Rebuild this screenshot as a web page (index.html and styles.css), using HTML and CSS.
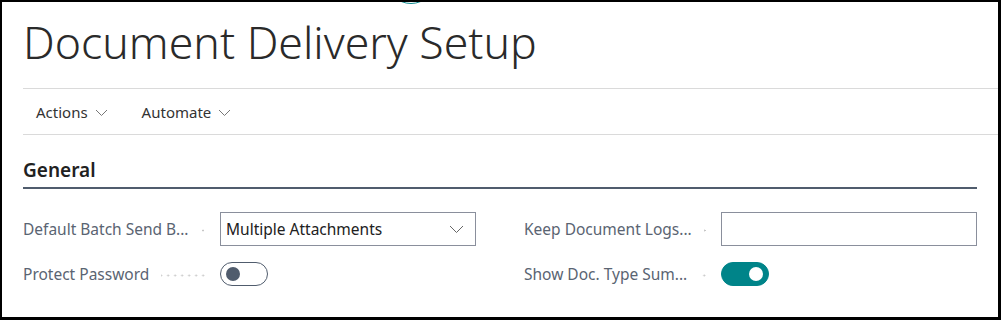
FILE: index.html
```html
<!DOCTYPE html>
<html lang="en">
<head>
  <meta charset="UTF-8" />
  <title>Document Delivery Setup</title>
  <link rel="stylesheet" href="styles.css">
</head>
<body>
  <div class="frame">
    <div class="busy-ring"></div>

    <div class="header">
      <h1 class="title">Document Delivery Setup</h1>
    </div>

    <div class="toolbar">
      <button class="menu-btn">Actions
        <svg class="chev" width="13" height="8" viewBox="0 0 13 8"><path d="M1 1 L6.5 6.5 L12 1" fill="none" stroke="#777" stroke-width="1"/></svg>
      </button>
      <button class="menu-btn">Automate
        <svg class="chev" width="13" height="8" viewBox="0 0 13 8"><path d="M1 1 L6.5 6.5 L12 1" fill="none" stroke="#777" stroke-width="1"/></svg>
      </button>
    </div>

    <div class="section">
      <h2 class="section-title">General</h2>

      <div class="fields">
        <div class="col">
          <div class="field">
            <span class="label">Default Batch Send B...</span>
            <span class="leader"></span>
            <div class="select">
              <span>Multiple Attachments</span>
              <svg width="15" height="9" viewBox="0 0 15 9"><path d="M1 1 L7.5 7.5 L14 1" fill="none" stroke="#666" stroke-width="1"/></svg>
            </div>
          </div>
          <div class="field">
            <span class="label">Protect Password</span>
            <span class="leader"></span>
            <div class="toggle"><span class="knob"></span></div>
          </div>
        </div>

        <div class="col">
          <div class="field">
            <span class="label">Keep Document Logs...</span>
            <span class="leader"></span>
            <div class="input"></div>
          </div>
          <div class="field">
            <span class="label">Show Doc. Type Sum...</span>
            <span class="leader"></span>
            <div class="toggle on"><span class="knob"></span></div>
          </div>
        </div>
      </div>
    </div>
  </div>
</body>
</html>
```

FILE: styles.css
```css
body {
  margin: 0;
  font-family: "Noto Sans", "Open Sans", sans-serif;
  color: #212121;
  background: #ffffff;
}

.frame {
  position: relative;
  width: 1001px;
  height: 320px;
  box-sizing: border-box;
  border: 2px solid #000;
  border-right-width: 3px;
  border-bottom-width: 3px;
  overflow: hidden;
}

.busy-ring {
  position: absolute;
  left: 384px;
  top: -48px;
  width: 50px;
  height: 50px;
  box-sizing: border-box;
  border: 1.5px solid #0f8a8e;
  border-radius: 50%;
}

.header {
  height: 86px;
  margin-left: 21px;
  border-bottom: 1px solid #dadada;
}

.title {
  margin: 0;
  padding-top: 12px;
  font-size: 44.6px;
  font-weight: 300;
  line-height: 56px;
  color: #2a2a2a;
}

.toolbar {
  display: flex;
  align-items: center;
  gap: 34px;
  height: 45px;
  margin-left: 21px;
  padding-left: 13px;
  border-bottom: 1px solid #dadada;
}

.menu-btn {
  display: flex;
  align-items: center;
  gap: 7px;
  padding: 0;
  border: none;
  background: none;
  font-family: "Noto Sans", "Open Sans", sans-serif;
  font-size: 15px;
  color: #333;
  cursor: pointer;
}

.chev {
  margin-top: 2px;
}

.section {
  padding: 0 21px;
}

.section-title {
  margin: 0;
  padding-top: 22px;
  height: 30px;
  font-size: 19px;
  font-weight: 600;
  line-height: 26px;
  color: #212121;
  border-bottom: 2px solid #505c6d;
}

.fields {
  display: grid;
  grid-template-columns: 453px 453px;
  column-gap: 48px;
  padding-top: 23px;
}

.col {
  display: flex;
  flex-direction: column;
  gap: 11px;
}

.field {
  display: flex;
  align-items: center;
  height: 34px;
}

.label {
  font-size: 15.5px;
  color: #5a6472;
  white-space: nowrap;
}

.leader {
  flex: 1;
  height: 3px;
  margin: 2px 13px 0 12px;
  background-image: radial-gradient(circle, #c6c6c6 0.8px, transparent 1.2px);
  background-size: 7px 3px;
  background-position: right center;
  background-repeat: repeat-x;
}

.select,
.input {
  width: 256px;
  height: 34px;
  box-sizing: border-box;
  border: 1px solid #8a8f9c;
  flex-shrink: 0;
}

.select {
  display: flex;
  align-items: center;
  justify-content: space-between;
  padding: 0 11px 0 5px;
  font-size: 15.5px;
  color: #212121;
}

.toggle {
  position: relative;
  width: 48px;
  height: 24px;
  box-sizing: border-box;
  border: 1px solid #505c6d;
  border-radius: 12px;
  margin-right: 208px;
  flex-shrink: 0;
}

.toggle .knob {
  position: absolute;
  left: 5px;
  top: 4px;
  width: 14px;
  height: 14px;
  border-radius: 50%;
  background: #505c6d;
}

.toggle.on {
  background: #008489;
  border-color: #008489;
}

.toggle.on .knob {
  left: auto;
  right: 5px;
  background: #ffffff;
}
```
